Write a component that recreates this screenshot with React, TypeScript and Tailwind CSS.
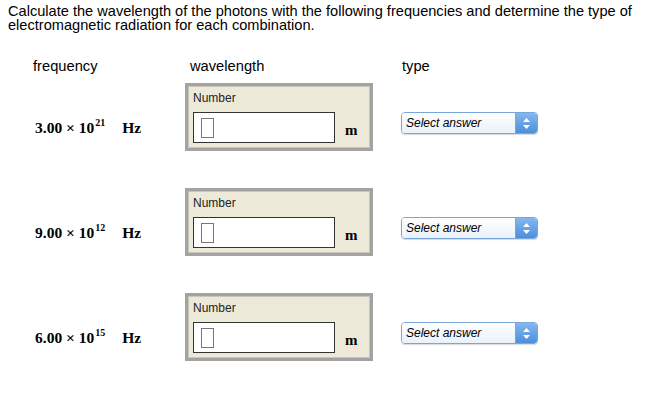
const rows = [
  { mant: "3.00", exp: "21" },
  { mant: "9.00", exp: "12" },
  { mant: "6.00", exp: "15" },
];

const SelectAnswer = () => (
  <div className="flex h-[22px] w-[137px] overflow-hidden rounded-[4px] border border-[#79a6dc] shadow-[0_1px_1px_rgba(0,0,0,0.15)]">
    <div className="flex flex-1 items-center bg-gradient-to-b from-white to-[#eaf1fa] pl-[4px] font-['Liberation_Sans',Arial,sans-serif] text-[12px] italic text-black">
      Select answer
    </div>
    <div className="flex w-[22px] flex-col items-center justify-center gap-[3px] border-l border-[#79a6dc] bg-gradient-to-b from-[#84b8ee] to-[#4b8fdb]">
      <svg width="7" height="4" viewBox="0 0 7 4">
        <polygon points="3.5,0 7,4 0,4" fill="white" />
      </svg>
      <svg width="7" height="4" viewBox="0 0 7 4">
        <polygon points="0,0 7,0 3.5,4" fill="white" />
      </svg>
    </div>
  </div>
);

const NumberBox = () => (
  <div className="w-[188px] border-[3px] border-[#a3a3a3] bg-[#ece9d8] px-[5px] pt-[5px] pb-[5px] shadow-[inset_0_0_0_1px_#c8c6bb]">
    <div className="h-[14px] font-['Liberation_Sans',Arial,sans-serif] text-[12px] leading-[14px] text-[#222]">
      Number
    </div>
    <div className="mt-[7px] flex items-center">
      <div className="flex h-[31px] w-[142px] items-center border border-[#333] bg-white pl-[7px]">
        <div className="h-[20px] w-[13px] border border-[#777]" />
      </div>
      <span className="ml-[10px] mt-[6px] font-['Liberation_Serif','Times_New_Roman',serif] text-[15px] font-bold">
        m
      </span>
    </div>
  </div>
);

export default function App() {
  return (
    <div className="h-[404px] w-[655px] bg-white text-black">
      <p className="px-[8px] pt-[4px] font-['Liberation_Sans',Arial,sans-serif] text-[14.6px] leading-[14px]">
        Calculate the wavelength of the photons with the following frequencies and determine the type of electromagnetic radiation for each combination.
      </p>
      <div className="mt-[26px] flex font-['Liberation_Sans',Arial,sans-serif] text-[14.7px] leading-[16px]">
        <span className="ml-[33px] w-[157px]">frequency</span>
        <span className="w-[212px]">wavelength</span>
        <span>type</span>
      </div>
      <div className="mt-[9px] flex flex-col gap-[37px]">
        {rows.map((r) => (
          <div key={r.exp} className="flex items-start">
            <div className="ml-[35px] mt-[36px] w-[150px] whitespace-nowrap font-['Liberation_Serif','Times_New_Roman',serif] text-[15.5px] font-bold leading-[18px]">
              {r.mant} × 10
              <sup className="top-[-7px] ml-[1px] text-[10px]">{r.exp}</sup>
              <span className="ml-[17px]">Hz</span>
            </div>
            <NumberBox />
            <div className="ml-[28px] mt-[29px]">
              <SelectAnswer />
            </div>
          </div>
        ))}
      </div>
    </div>
  );
}
